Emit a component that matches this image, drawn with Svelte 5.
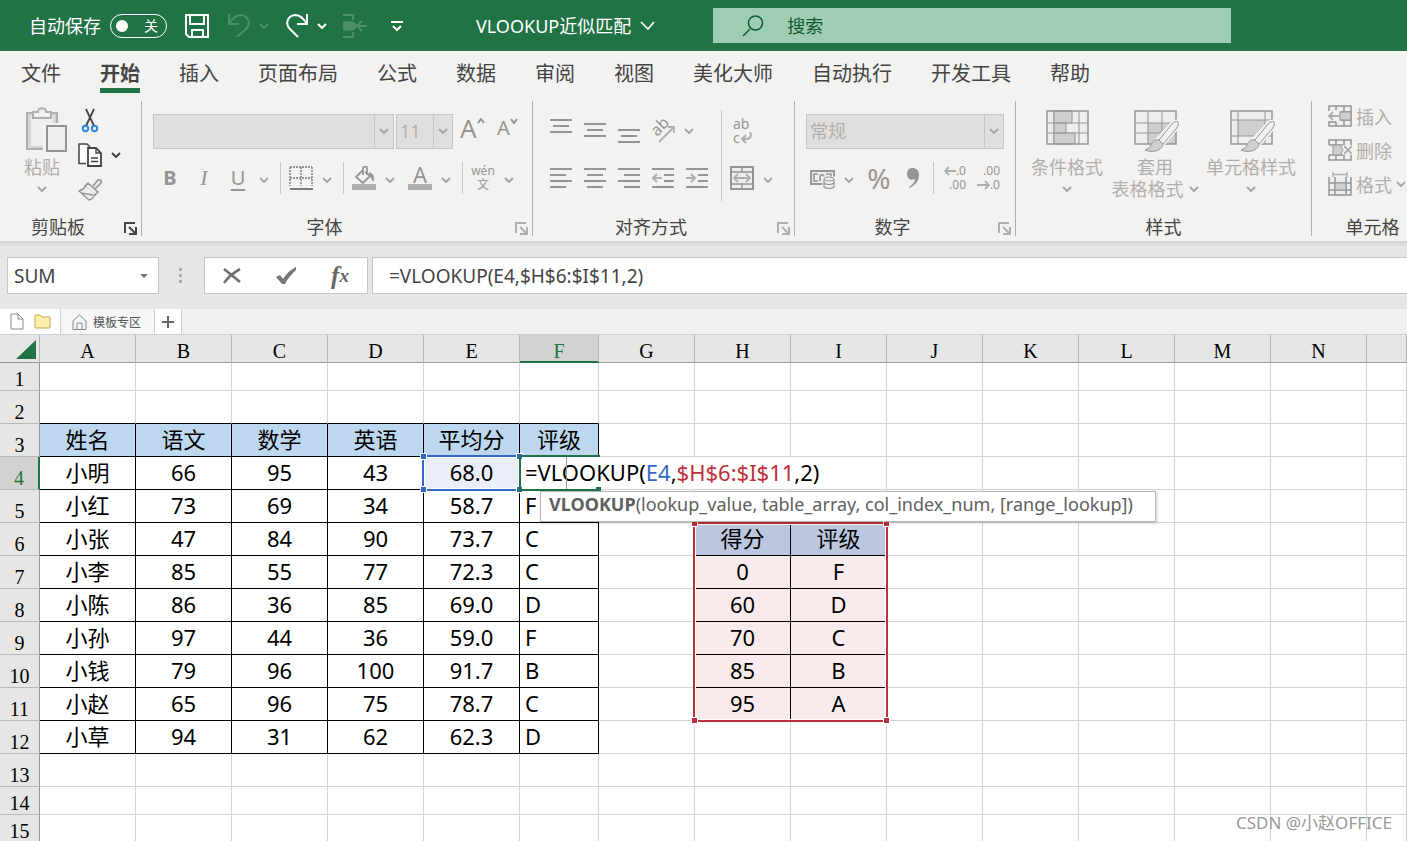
<script lang="ts">
  interface Row {
    n: number;
    short?: boolean;
    scores?: string[];
    lookup?: string[];
  }

  const menu = ['文件', '开始', '插入', '页面布局', '公式', '数据', '审阅', '视图', '美化大师', '自动执行', '开发工具', '帮助'];
  const columns = ['A', 'B', 'C', 'D', 'E', 'F', 'G', 'H', 'I', 'J', 'K', 'L', 'M', 'N', ''];

  const rows: Row[] = [
    { n: 1, short: true },
    { n: 2 },
    { n: 3, scores: ['姓名', '语文', '数学', '英语', '平均分', '评级'] },
    { n: 4, scores: ['小明', '66', '95', '43', '68.0', ''] },
    { n: 5, scores: ['小红', '73', '69', '34', '58.7', 'F'] },
    { n: 6, scores: ['小张', '47', '84', '90', '73.7', 'C'], lookup: ['得分', '评级'] },
    { n: 7, scores: ['小李', '85', '55', '77', '72.3', 'C'], lookup: ['0', 'F'] },
    { n: 8, scores: ['小陈', '86', '36', '85', '69.0', 'D'], lookup: ['60', 'D'] },
    { n: 9, scores: ['小孙', '97', '44', '36', '59.0', 'F'], lookup: ['70', 'C'] },
    { n: 10, scores: ['小钱', '79', '96', '100', '91.7', 'B'], lookup: ['85', 'B'] },
    { n: 11, scores: ['小赵', '65', '96', '75', '78.7', 'C'], lookup: ['95', 'A'] },
    { n: 12, scores: ['小草', '94', '31', '62', '62.3', 'D'] },
    { n: 13 },
    { n: 14, short: true },
    { n: 15, short: true },
  ];

  let activeMenu = $state('开始');
  let autosave = $state(false);
  let query = $state('');
  let cellName = $state('SUM');
  let formula = $state('=VLOOKUP(E4,$H$6:$I$11,2)');

  function cellText(row: Row, col: number) {
    if (col < 6) return row.scores?.[col] ?? '';
    if (col === 7 || col === 8) return row.lookup?.[col - 7] ?? '';
    return '';
  }

  // the in-cell editor spans F4:I4
  function visibleCols(row: Row) {
    return columns.map((_, i) => i).filter((i) => row.n !== 4 || i < 6 || i > 8);
  }

  const alignLines: Record<string, string> = {
    top: 'M1 3h22M4 9h16M1 15h22',
    middle: 'M1 7h22M4 13h16M1 19h22',
    bottom: 'M1 13h22M4 19h16M1 25h22',
    left: 'M1 5h22M1 11h16M1 17h22M1 23h16',
    center: 'M1 5h22M4 11h16M1 17h22M4 23h16',
    right: 'M1 5h22M7 11h16M1 17h22M7 23h16',
    outdent: 'M1 5h22M13 11h10M13 17h10M1 23h22',
    indent: 'M1 5h22M13 11h10M13 17h10M1 23h22',
  };
</script>

{#snippet chevron()}
  <svg class="chev" width="10" height="6" viewBox="0 0 10 6"><path d="M1 1l4 4 4-4" /></svg>
{/snippet}

{#snippet drop(label: string)}
  <button class="drop" aria-label={label}>{@render chevron()}</button>
{/snippet}

{#snippet lines(kind: string, label: string)}
  <button class="tool" aria-label={label}>
    <svg width="24" height="28" viewBox="0 0 24 28">
      <path d={alignLines[kind]} stroke="#979593" stroke-width="2" />
      {#if kind === 'outdent'}
        <path d="M11 14H2M6 10l-4 4 4 4" stroke="#b1afad" stroke-width="2" />
      {:else if kind === 'indent'}
        <path d="M1 14h9M6 10l4 4-4 4" stroke="#b1afad" stroke-width="2" />
      {/if}
    </svg>
  </button>
{/snippet}

{#snippet brush()}
  <path d="M49 15c-2-1-4 0-6 2L29 32l5 5 13-15c2-3 3-5 2-7z" fill="#f3f2f1" stroke="#f3f2f1" stroke-width="4" />
  <path d="M49 15c-2-1-4 0-6 2L30 33l4 4 13-15c2-3 3-5 2-7z" fill="#f3f2f1" stroke="#979593" />
  <path d="M30 33c-4-1-7 2-8 5-1 2-3 4-6 5 5 2 11 2 15-1 2-2 3-3 3-5z" fill="#cfcfcf" stroke="#979593" />
{/snippet}

{#snippet groupFoot(label: string, launcher: string)}
  <div class="foot">
    <span class="foot-label">{label}</span>
    {#if launcher}
      <button class="launcher {launcher}" aria-label="{label}设置">
        <svg width="13" height="13" viewBox="0 0 13 13"><path d="M1 11V1h10M5 5l6 6M12 5v7H5" /></svg>
      </button>
    {/if}
  </div>
{/snippet}

<div class="app">
  <header class="titlebar">
    <label for="autosave">自动保存</label>
    <span class="toggle">
      <input id="autosave" type="checkbox" bind:checked={autosave} />
      <span>{autosave ? '开' : '关'}</span>
    </span>
    <div class="quick">
      <button class="wide" aria-label="保存">
        <svg width="24" height="24" viewBox="0 0 24 24"><path d="M1 1h22v22H4l-3-3zM5 1v9h14V1M7 23v-7h11v7" stroke-width="2" /></svg>
      </button>
      <div class="pair dim">
        <button class="qbtn" aria-label="撤消">
          <svg width="24" height="24" viewBox="0 0 24 24"><path d="M2 0v10h10M2 10c3-5 7-9 12-9 8 1 10 9 5 14l-9 8" stroke-width="2" /></svg>
        </button>
        {@render drop('撤消列表')}
      </div>
      <div class="pair">
        <button class="qbtn" aria-label="恢复">
          <svg width="24" height="24" viewBox="0 0 24 24"><path d="M22 0v10H12M22 10c-3-5-7-9-12-9C2 2 0 10 5 15l8 8" stroke-width="2" /></svg>
        </button>
        {@render drop('恢复列表')}
      </div>
      <button class="qbtn dim" aria-label="插入单元格">
        <svg width="24" height="24" viewBox="0 0 24 24">
          <path d="M0 1h10v5M0 23h10v-5" stroke-width="2" />
          <path class="solid" d="M0 8h11l3 4-3 4H0z" />
          <path d="M24 12h-9M19 7l-5 5 5 5" stroke-width="2" />
        </svg>
      </button>
      <button class="wide" aria-label="自定义快速访问工具栏">
        <svg width="12" height="12" viewBox="0 0 12 12"><path d="M0 2h12M2 6l4 4 4-4" stroke-width="2" /></svg>
      </button>
    </div>
    <button class="doc">
      VLOOKUP近似匹配
      <svg width="15" height="9" viewBox="0 0 15 9"><path d="M1 1l7 7 6-7" stroke-width="1.6" /></svg>
    </button>
    <div class="search">
      <svg width="22" height="22" viewBox="0 0 22 22"><path d="M8 14L1 21" stroke-width="1.5" /><circle cx="13.5" cy="8" r="7" stroke-width="1.5" /></svg>
      <input type="text" placeholder="搜索" aria-label="搜索" bind:value={query} />
    </div>
  </header>

  <nav class="menu">
    {#each menu as item (item)}
      <button class:active={item === activeMenu} onclick={() => (activeMenu = item)}>{item}</button>
    {/each}
  </nav>

  <div class="ribbon">
    <section class="group clipboard">
      <div class="body">
        <button class="big paste">
          <svg width="52" height="46" viewBox="0 0 52 46">
            <path d="M11 6h30v36H11z" fill="#d6d6d6" stroke="#b1afad" stroke-width="2" />
            <path d="M15 9h22v30H15z" fill="#eee" />
            <path d="M17 11V5h5c0-5 8-5 8 0h5v6z" fill="#f3f2f1" stroke="#b1afad" stroke-width="2" />
            <path d="M27 16h24v28H27z" fill="#f3f2f1" />
            <path d="M31 19h19v25H31z" fill="#eee" stroke="#979593" stroke-width="2" />
          </svg>
          <span>粘贴</span>
          <span>{@render chevron()}</span>
        </button>
        <div class="stack">
          <button class="tool" aria-label="剪切">
            <svg width="24" height="26" viewBox="0 0 24 26">
              <path d="M8 2l8 17M16 2L8 19" stroke="#444" stroke-width="1.8" />
              <circle cx="7.5" cy="21.5" r="2.7" stroke="#2b88d8" stroke-width="2" />
              <circle cx="16.5" cy="21.5" r="2.7" stroke="#2b88d8" stroke-width="2" />
            </svg>
          </button>
          <div class="pair dark">
            <button class="tool" aria-label="复制">
              <svg width="24" height="24" viewBox="0 0 24 24">
                <path d="M8 20.500H1V1h8l3 3" fill="#fff" stroke="#444" stroke-width="1.5" />
                <path d="M10 5h8l5 5v13H10z" fill="#fff" stroke="#444" stroke-width="1.8" />
                <path d="M18 5v5h5M13 15h7M13 18.500h7" stroke="#444" stroke-width="1.3" />
              </svg>
            </button>
            {@render drop('复制选项')}
          </div>
          <button class="tool" aria-label="格式刷">
            <svg width="24" height="24" viewBox="0 0 24 24">
              <path d="M15 8l5-6c2-1 4 1 3 3l-6 6M10 5l10 9-3 3-10-9z" fill="#eee" stroke="#979593" stroke-width="1.6" />
              <path d="M8 8c-2 3-4 4-7 5l10 9c3-1 5-3 6-6M3 15l12 2" fill="#eee" stroke="#979593" stroke-width="1.4" />
            </svg>
          </button>
        </div>
      </div>
      {@render groupFoot('剪贴板', 'on')}
    </section>

    <section class="group font">
      <div class="body rows">
        <div class="line">
          <div class="combo family">
            <select aria-label="字体" disabled><option></option></select>
            <span class="arrow">{@render chevron()}</span>
          </div>
          <div class="combo size">
            <select aria-label="字号" disabled><option>11</option></select>
            <span class="arrow">{@render chevron()}</span>
          </div>
          <button class="tool grow" aria-label="增大字号">
            <span class="letter large">A</span><svg width="8" height="6" viewBox="0 0 8 6"><path d="M1 5l3-4 3 4" /></svg>
          </button>
          <button class="tool grow" aria-label="减小字号">
            <span class="letter">A</span><svg width="8" height="6" viewBox="0 0 8 6"><path d="M1 1l3 4 3-4" /></svg>
          </button>
        </div>
        <div class="line">
          <button class="tool letter bold">B</button>
          <button class="tool letter italic">I</button>
          <button class="tool letter underline">U</button>
          {@render drop('下划线选项')}
          <span class="sep"></span>
          <button class="tool" aria-label="边框">
            <svg width="24" height="24" viewBox="0 0 24 24">
              <path d="M1 1h22M1 12h22M1 1v19M12 1v19M23 1v19" stroke="#979593" stroke-width="1.8" stroke-dasharray="2 1" />
              <path d="M1 23h23" stroke="#807e7c" stroke-width="2" />
            </svg>
          </button>
          {@render drop('边框选项')}
          <span class="sep"></span>
          <button class="tool" aria-label="填充颜色">
            <svg width="24" height="24" viewBox="0 0 24 24">
              <path d="M11 4l-7 7 7 6 7-7-5-4M11 9V2c1-2 4-2 4 0v7" stroke="#979593" stroke-width="1.8" />
              <path d="M17 7c4 0 5 3 4 8-1-2-2-4-4-8z" fill="#979593" stroke="#979593" />
              <path d="M0 18h24v6H0z" fill="#b1afad" />
            </svg>
          </button>
          {@render drop('填充选项')}
          <span class="gap"></span>
          <button class="tool color" aria-label="字体颜色"><span class="letter">A</span></button>
          {@render drop('字体颜色选项')}
          <span class="sep"></span>
          <button class="tool pinyin"><span>wén</span><span>文</span></button>
          {@render drop('拼音选项')}
        </div>
      </div>
      {@render groupFoot('字体', 'off')}
    </section>

    <section class="group align">
      <div class="body">
        <div class="rows">
          <div class="line">
            {@render lines('top', '顶端对齐')}
            {@render lines('middle', '垂直居中')}
            {@render lines('bottom', '底端对齐')}
            <button class="tool slanted" aria-label="方向">
              <span>ab</span>
              <svg width="26" height="26" viewBox="0 0 26 26"><path d="M9 24L24 9M18 9h6v6" stroke="#b1afad" stroke-width="1.8" /></svg>
            </button>
            {@render drop('方向选项')}
          </div>
          <div class="line">
            {@render lines('left', '左对齐')}
            {@render lines('center', '居中')}
            {@render lines('right', '右对齐')}
            {@render lines('outdent', '减少缩进量')}
            {@render lines('indent', '增加缩进量')}
          </div>
        </div>
        <span class="sep tall"></span>
        <div class="rows">
          <div class="line">
            <button class="tool twoline wrap" aria-label="自动换行">
              <span>ab</span>
              <span>c<svg width="12" height="12" viewBox="0 0 12 12"><path d="M10 0c2 4 0 7-3 7H2M6 3L2 7l4 4" stroke="#b1afad" stroke-width="2" /></svg></span>
            </button>
          </div>
          <div class="line">
            <button class="tool" aria-label="合并后居中">
              <svg width="24" height="24" viewBox="0 0 24 24">
                <path d="M1 1h22v22H1z" fill="#eee" stroke="#979593" stroke-width="2" />
                <path d="M1 6h22M1 18h22M12 1v5M12 18v5" stroke="#979593" stroke-width="1.5" />
                <path d="M4 12h16M8 8l-4 4 4 4M16 8l4 4-4 4" stroke="#b1afad" stroke-width="1.8" />
              </svg>
            </button>
            {@render drop('合并选项')}
          </div>
        </div>
      </div>
      {@render groupFoot('对齐方式', 'off')}
    </section>

    <section class="group number">
      <div class="body rows">
        <div class="line">
          <div class="combo format">
            <select aria-label="数字格式" disabled><option>常规</option></select>
            <span class="arrow">{@render chevron()}</span>
          </div>
        </div>
        <div class="line">
          <button class="tool" aria-label="会计数字格式">
            <svg width="26" height="24" viewBox="0 0 26 24">
              <path d="M1 5h23v13H1z" fill="#eee" stroke="#979593" stroke-width="2" />
              <path d="M8 8H4v7h4M10 15v-4c0-3 4-3 4 0M16 8h5v3" stroke="#979593" stroke-width="1.6" />
              <path d="M13 11v11c2 2 9 2 12 0V11z" fill="#f3f2f1" stroke="#f3f2f1" />
              <path d="M14 13v8c2 2 8 2 10 0v-8M14 17c2 2 8 2 10 0" stroke="#979593" stroke-width="1.2" />
              <ellipse cx="19" cy="13" rx="5" ry="2" fill="#eee" stroke="#979593" />
            </svg>
          </button>
          {@render drop('会计格式选项')}
          <span class="gap"></span>
          <button class="tool percent">%</button>
          <button class="tool" aria-label="千位分隔样式">
            <svg width="12" height="20" viewBox="0 0 12 20"><path d="M5.500 0C9 0 12 2 12 7c0 6-4 10-9 13l-1-1c3-2 6-5 6-8-3 2-8 0-8-5 0-4 2-6 5.500-6z" fill="#979593" /></svg>
          </button>
          <span class="sep tight"></span>
          <button class="tool twoline decimals" aria-label="增加小数位数">
            <span><svg width="13" height="10" viewBox="0 0 13 10"><path d="M13 5H2M6 1L2 5l4 4" stroke="#b1afad" stroke-width="1.8" /></svg>.0</span>
            <span>.00</span>
          </button>
          <button class="tool twoline decimals" aria-label="减少小数位数">
            <span>.00</span>
            <span><svg width="13" height="10" viewBox="0 0 13 10"><path d="M0 5h12M8 1l4 4-4 4" stroke="#b1afad" stroke-width="1.8" /></svg>.0</span>
          </button>
        </div>
      </div>
      {@render groupFoot('数字', 'off')}
    </section>

    <section class="group styles">
      <div class="body">
        <button class="big cond">
          <svg width="52" height="46" viewBox="0 0 52 46">
            <path d="M6 4h41v33H6z" fill="#eee" />
            <path d="M6 16h41M6 26h41M13 4v33M38 4v33" stroke="#979593" />
            <path d="M13 4h18v12H13zM13 16h12v10H13zM13 26h21v11H13z" fill="#cfcfcf" stroke="#979593" />
            <path d="M6 4h41v33H6z" stroke="#979593" stroke-width="1.5" />
          </svg>
          <span>条件格式</span>
          <span>{@render chevron()}</span>
        </button>
        <button class="big">
          <svg width="52" height="46" viewBox="0 0 52 46">
            <path d="M6 4h41v33H6z" fill="#eee" />
            <path d="M19 16h28v21H19z" fill="#cfcfcf" />
            <path d="M6 16h41M6 26h41M19 4v33M33 4v33" stroke="#979593" />
            <path d="M6 4h41v33H6z" stroke="#979593" stroke-width="1.5" />
            {@render brush()}
          </svg>
          <span>套用</span>
          <span>表格格式 {@render chevron()}</span>
        </button>
        <button class="big">
          <svg width="52" height="46" viewBox="0 0 52 46">
            <path d="M6 4h41v33H6z" fill="#eee" />
            <path d="M13 13h27v16H13z" fill="#cfcfcf" />
            <path d="M6 13h41M6 29h41M13 4v33M40 4v33" stroke="#979593" />
            <path d="M6 4h41v33H6z" stroke="#979593" stroke-width="1.5" />
            {@render brush()}
          </svg>
          <span>单元格样式</span>
          <span>{@render chevron()}</span>
        </button>
      </div>
      {@render groupFoot('样式', '')}
    </section>

    <section class="group cells">
      <div class="body stack">
        <button class="small">
          <svg width="24" height="24" viewBox="0 0 24 24">
            <path d="M1 8V2h22v20H1v-6M8 2v4M16 2v20M8 18v4M12 8h11M12 16h11M1 18h7" fill="#eee" stroke="#979593" stroke-width="1.5" />
            <path d="M12 8h11v8H12z" fill="#cfcfcf" stroke="#979593" />
            <path d="M0 7h11v10H0z" fill="#f3f2f1" />
            <path d="M11 12H1M5 8l-4 4 4 4" stroke="#b1afad" stroke-width="1.8" />
          </svg>
          插入
        </button>
        <button class="small">
          <svg width="24" height="24" viewBox="0 0 24 24">
            <path d="M1 7V2h22v5M1 17v5h22v-5M8 2v5M16 2v5M8 17v5M16 17v5M1 7h14M1 17h14" stroke="#979593" stroke-width="1.5" />
            <path d="M5 7h7l3 5-3 5H5z" fill="#cfcfcf" stroke="#979593" />
            <path d="M16 8l8 8M24 8l-8 8" stroke="#b1afad" stroke-width="1.8" />
          </svg>
          删除
        </button>
        <button class="small">
          <svg width="24" height="24" viewBox="0 0 24 24">
            <path d="M1 5v18h22V5M1 11h22M1 18h22M7 5v18M18 5v18" fill="#eee" stroke="#979593" stroke-width="1.5" />
            <path d="M7 11h11v7H7z" fill="#cfcfcf" stroke="#979593" />
            <path d="M5 0v5M19 0v5M5 2.500h14" stroke="#b1afad" stroke-width="1.5" />
          </svg>
          格式
          {@render chevron()}
        </button>
      </div>
      {@render groupFoot('单元格', '')}
    </section>
  </div>

  <div class="formula-bar">
    <div class="name-box">
      <input type="text" aria-label="名称框" bind:value={cellName} />
      <button aria-label="名称列表"><svg width="8" height="4" viewBox="0 0 8 4"><path d="M0 0h8L4 4z" fill="#777" /></svg></button>
    </div>
    <span class="grip"><i></i><i></i><i></i></span>
    <div class="actions">
      <button aria-label="取消">
        <svg width="18" height="16" viewBox="0 0 18 16"><path d="M1 1c5 4 10 8 16 13M17 1C10 5 5 9 1 15" stroke="#707070" stroke-width="2.6" /></svg>
      </button>
      <button aria-label="输入">
        <svg width="20" height="17" viewBox="0 0 20 17"><path d="M0 10l4-2 3 4C10 7 14 3 20 0v3c-4 4-8 8-11 14H6z" fill="#777" /></svg>
      </button>
      <button class="fx" aria-label="插入函数">f<small>x</small></button>
    </div>
    <input class="formula" type="text" aria-label="编辑栏" bind:value={formula} />
  </div>

  <div class="doc-tabs">
    <div class="files">
      <button aria-label="新建">
        <svg width="14" height="17" viewBox="0 0 14 17"><path d="M1 1h7l5 5v10H1zM8 1v5h5" fill="#fff" stroke="#8a8a8a" /></svg>
      </button>
      <button aria-label="打开">
        <svg width="17" height="15" viewBox="0 0 17 15"><path d="M1 2c0-1 0-1 1-1h4l2 2h7c1 0 1 0 1 1v9c0 1 0 1-1 1H2c-1 0-1 0-1-1z" fill="#fff0b0" stroke="#c8a04a" /></svg>
      </button>
    </div>
    <button class="home">
      <svg width="15" height="16" viewBox="0 0 15 16"><path d="M1 7l6.500-6L14 7v8.500H1zM5 15.500V9h5v6.500" stroke="#8a8a8a" /></svg>
      模板专区
    </button>
    <button class="add" aria-label="新建标签">
      <svg width="12" height="12" viewBox="0 0 12 12"><path d="M6 0v12M0 6h12" stroke="#666" stroke-width="2" /></svg>
    </button>
  </div>

  <main class="sheet">
    <table>
      <colgroup>
        <col class="c-head" />
        {#each columns as col (col)}
          <col class={col === 'F' ? 'c-narrow' : col ? 'c-std' : 'c-rest'} />
        {/each}
      </colgroup>
      <thead>
        <tr>
          <th class="corner" aria-label="全选">
            <svg width="20" height="19" viewBox="0 0 20 19"><path d="M20 0v19H0z" fill="#217346" /></svg>
          </th>
          {#each columns as col (col)}
            <th scope="col" class:current={col === 'F'}>{col}</th>
          {/each}
        </tr>
      </thead>
      <tbody>
        {#each rows as row (row.n)}
          <tr class:short={row.short}>
            <th scope="row" class:current={row.n === 4}>{row.n}</th>
            {#each visibleCols(row) as col (col)}
              {#if row.n === 4 && col === 5}
                <td class="editing" colspan="4">
                  <span>=VLOOKUP(<b class="arg1">E4</b>,<b class="arg2">$H$6:$I$11</b>,2)</span>
                  <div class="active-cell"></div>
                  <div class="caret"></div>
                  <div class="tip" role="tooltip"><strong>VLOOKUP</strong>(lookup_value, table_array, col_index_num, [range_lookup])</div>
                </td>
              {:else}
                <td
                  class:boxed={row.scores && col < 6}
                  class:above={row.n === 2 && col < 6}
                  class:title={row.n === 3 && col < 6}
                  class:grade={row.n > 3 && col === 5}
                  class:range={row.lookup && (col === 7 || col === 8)}
                  class:range-title={row.n === 6 && (col === 7 || col === 8)}
                  class:ref={row.n === 4 && col === 4}
                >
                  {cellText(row, col)}
                  {#if row.n === 4 && col === 4}
                    <div class="marks blue"><i></i><i></i><i></i><i></i></div>
                  {:else if row.n === 6 && col === 7}
                    <div class="marks red"><i></i><i></i><i></i><i></i></div>
                  {/if}
                </td>
              {/if}
            {/each}
          </tr>
        {/each}
      </tbody>
    </table>
    <div class="watermark">CSDN @小赵OFFICE</div>
  </main>
</div>

<style>
  :global(body) {
    margin: 0;
    font-family: 'Noto Sans', 'Noto Sans CJK SC', sans-serif;
  }

  .app {
    display: flex;
    flex-direction: column;
    height: 100vh;
    overflow: hidden;
    background: #fff;
  }

  button,
  input,
  select {
    font: inherit;
    color: inherit;
    margin: 0;
    padding: 0;
    border: 0;
    background: none;
    box-sizing: border-box;
  }

  button {
    display: flex;
    align-items: center;
    justify-content: center;
    flex-shrink: 0;
    white-space: nowrap;
  }

  svg {
    display: block;
    flex-shrink: 0;
    fill: none;
  }

  .chev path {
    stroke: #a8a6a4;
    stroke-width: 2;
  }

  /* title bar */
  .titlebar {
    display: flex;
    align-items: center;
    height: 51px;
    padding-left: 29px;
    flex-shrink: 0;
    background: #217346;
    color: #fff;
    font-size: 18px;
    line-height: 24px;
    white-space: nowrap;
  }

  .titlebar svg path {
    stroke: #fff;
  }

  .titlebar .dim svg path {
    stroke: #4d9068;
  }

  .titlebar .dim svg .solid {
    fill: #4d9068;
  }

  .toggle {
    display: flex;
    align-items: center;
    justify-content: space-between;
    width: 57px;
    height: 24px;
    margin: 0 12px 0 9px;
    padding: 0 8px 0 5px;
    box-sizing: border-box;
    border: 1px solid #fff;
    border-radius: 12px;
    font-size: 14px;
    flex-shrink: 0;
  }

  .toggle input {
    appearance: none;
    width: 12px;
    height: 12px;
    border-radius: 6px;
    background: #fff;
  }

  .quick {
    display: flex;
    gap: 8px;
  }

  .wide {
    width: 36px;
  }

  .qbtn {
    width: 32px;
    height: 24px;
  }

  .pair {
    display: flex;
    align-items: center;
  }

  .doc {
    gap: 9px;
    margin: 0 58px 0 61px;
  }

  .search {
    display: flex;
    align-items: center;
    flex: 0 1 518px;
    height: 35px;
    padding-left: 29px;
    box-sizing: border-box;
    gap: 23px;
    background: #9fcdb3;
    color: #0f5a2f;
  }

  .search svg path,
  .search svg circle {
    stroke: #0f5a2f;
  }

  .search input {
    flex: 1;
    min-width: 0;
  }

  .search input::placeholder {
    color: #0f5a2f;
    opacity: 1;
  }

  /* menu */
  .menu {
    display: flex;
    gap: 39px;
    height: 50px;
    padding-left: 21px;
    flex-shrink: 0;
    background: #f3f2f1;
    color: #444;
    font-size: 20px;
  }

  .menu button {
    height: 42px;
    padding-top: 8px;
    border-bottom: 5px solid transparent;
    line-height: 29px;
  }

  .menu .active {
    border-color: #217346;
    font-weight: 700;
  }

  /* ribbon */
  .ribbon {
    display: flex;
    flex-shrink: 0;
    padding-bottom: 5px;
    background: #f3f2f1;
    overflow: hidden;
  }

  .group {
    display: flex;
    flex-direction: column;
    flex-shrink: 0;
    height: 135px;
    box-sizing: border-box;
    border-right: 1px solid #b3b0ad;
  }

  .clipboard {
    width: 142px;
  }

  .font {
    width: 391px;
  }

  .align {
    width: 262px;
  }

  .number {
    width: 221px;
  }

  .styles {
    width: 296px;
  }

  .cells {
    width: 122px;
  }

  .body {
    display: flex;
    flex: 1;
    min-height: 0;
    padding-left: 11px;
  }

  .rows {
    display: flex;
    flex-direction: column;
    gap: 13px;
    padding-top: 12px;
  }

  .stack {
    display: flex;
    flex-direction: column;
    padding-top: 1px;
  }

  .stack .tool {
    height: 35px;
  }

  .line {
    display: flex;
    align-items: center;
    height: 32px;
  }

  .line:first-child {
    height: 36px;
  }

  .line:last-child .drop {
    padding-top: 4px;
  }

  .tool {
    width: 34px;
    height: 32px;
    color: #979593;
  }

  .drop {
    width: 18px;
    height: 24px;
  }

  .dark .chev path {
    stroke: #444;
  }

  .sep {
    width: 1px;
    height: 32px;
    margin: 0 3px 0 7px;
    background: #c8c6c4;
  }

  .sep.tight {
    margin-left: 3px;
  }

  .sep.tall {
    height: 91px;
    margin-top: 9px;
  }

  .gap {
    width: 4px;
  }

  .combo {
    display: flex;
    height: 35px;
    box-sizing: border-box;
    border: 1px solid #c8c6c4;
    background: #e1dfdd;
  }

  .combo select {
    appearance: none;
    flex: 1;
    min-width: 0;
    padding-left: 3px;
    color: #b1afad;
    font-size: 18px;
    opacity: 1;
  }

  .combo .arrow {
    display: flex;
    align-items: center;
    justify-content: center;
    width: 18px;
    border-left: 1px solid #c8c6c4;
  }

  .family {
    width: 241px;
    margin-right: 2px;
  }

  .size {
    width: 57px;
    margin-right: 5px;
  }

  .format {
    width: 198px;
  }

  .letter {
    font-size: 20px;
    line-height: 26px;
  }

  .letter.large {
    font-size: 26px;
  }

  .grow {
    align-items: flex-start;
    justify-content: flex-start;
    width: 37px;
    padding-left: 2px;
  }

  .grow svg {
    margin-top: 3px;
  }

  .grow path {
    stroke: #979593;
    stroke-width: 2;
  }

  .bold {
    font-weight: 700;
  }

  .italic {
    font-family: 'Liberation Serif', serif;
    font-style: italic;
    font-size: 22px;
  }

  .underline {
    text-decoration: underline;
    text-underline-offset: 4px;
  }

  .color .letter {
    width: 24px;
    height: 24px;
    box-sizing: border-box;
    border-bottom: 6px solid #b1afad;
    font-size: 22px;
    line-height: 17px;
  }

  .pinyin {
    flex-direction: column;
    font-size: 12px;
    line-height: 14px;
  }

  .slanted {
    display: grid;
    place-items: center;
  }

  .slanted span,
  .slanted svg {
    grid-area: 1 / 1;
  }

  .slanted span {
    margin: 0 8px 10px 0;
    font-size: 16px;
    line-height: 18px;
    transform: rotate(-45deg);
  }

  .twoline {
    flex-direction: column;
    font-size: 12px;
    line-height: 14px;
  }

  .twoline span {
    display: flex;
    align-items: center;
  }

  .wrap {
    align-items: flex-start;
    padding-left: 8px;
    font-size: 14px;
  }

  .decimals {
    align-items: flex-end;
    padding-right: 5px;
  }

  .percent {
    font-size: 28px;
    line-height: 32px;
  }

  .big {
    flex-direction: column;
    justify-content: flex-start;
    align-self: flex-start;
    width: 96px;
    padding-top: 6px;
    color: #b1afad;
    font-size: 18px;
    line-height: 22px;
  }

  .big span {
    display: flex;
    align-items: center;
    gap: 5px;
    height: 22px;
  }

  .big svg + span {
    margin-top: 3px;
  }

  .paste {
    width: 62px;
  }

  .cond {
    width: 80px;
  }

  .cells .body {
    padding: 0 0 0 16px;
  }

  .small {
    justify-content: flex-start;
    height: 34px;
    gap: 4px;
    padding-bottom: 4px;
    color: #b1afad;
    font-size: 18px;
  }

  .foot {
    display: flex;
    align-items: center;
    height: 18px;
    color: #444;
    font-size: 18px;
    line-height: 18px;
  }

  .foot-label {
    flex: 1;
    text-align: center;
  }

  .launcher {
    width: 25px;
    padding: 3px 0 0 4px;
  }

  .launcher path {
    stroke: #b1afad;
    stroke-width: 2;
  }

  .launcher.on path {
    stroke: #444;
  }

  /* formula bar */
  .formula-bar {
    display: flex;
    height: 68px;
    padding: 16px 0 0 7px;
    box-sizing: border-box;
    flex-shrink: 0;
    background: linear-gradient(#d2d2d2, #e6e6e6 6px);
    color: #444;
    font-size: 19px;
  }

  .name-box,
  .actions,
  .formula {
    height: 37px;
    box-sizing: border-box;
    border: 1px solid #c6c6c6;
    background: #fff;
  }

  .name-box {
    display: flex;
    width: 152px;
  }

  .name-box input {
    flex: 1;
    min-width: 0;
    padding-left: 6px;
  }

  .name-box button {
    width: 28px;
  }

  .grip {
    display: flex;
    flex-direction: column;
    justify-content: center;
    gap: 3px;
    width: 3px;
    height: 37px;
    margin: 0 22px 0 20px;
  }

  .grip i {
    width: 3px;
    height: 3px;
    background: #ababab;
  }

  .actions {
    display: flex;
    width: 164px;
    margin-right: 4px;
  }

  .actions button {
    flex: 1;
  }

  .fx {
    color: #666;
    font-family: 'Liberation Serif', serif;
    font-size: 25px;
    font-style: italic;
    font-weight: 700;
  }

  .fx small {
    font-size: 19px;
  }

  .formula {
    flex: 1;
    min-width: 0;
    padding-left: 16px;
    border-right: 0;
  }

  /* document tabs */
  .doc-tabs {
    display: flex;
    height: 26px;
    box-sizing: border-box;
    flex-shrink: 0;
    border-bottom: 1px solid #d0d0d0;
    background: #f0f0f0;
    color: #555;
    font-size: 12px;
  }

  .files {
    display: flex;
    gap: 10px;
    padding: 0 9px 0 10px;
    border-right: 1px solid #d0d0d0;
    background: #fff;
  }

  .home {
    gap: 6px;
    padding: 0 13px 0 11px;
    border-right: 1px solid #d0d0d0;
    background: #f6f6f6;
  }

  .add {
    width: 27px;
    border-right: 1px solid #d0d0d0;
    background: #fff;
  }

  /* sheet */
  .sheet {
    position: relative;
    flex: 1;
    min-height: 0;
    overflow: hidden;
  }

  table {
    width: 100%;
    table-layout: fixed;
    border-collapse: separate;
    border-spacing: 0;
    color: #000;
  }

  .c-head {
    width: 40px;
  }

  .c-std {
    width: 96px;
  }

  .c-narrow {
    width: 79px;
  }

  .c-rest {
    width: auto;
  }

  tr {
    height: 33px;
  }

  thead tr,
  tr.short {
    height: 28px;
  }

  th {
    padding: 0;
    border-right: 1px solid #b8b8b8;
    border-bottom: 1px solid #999;
    background: #e6e6e6;
    font-family: 'Liberation Serif', serif;
    font-size: 20px;
    font-weight: 400;
    line-height: 22px;
  }

  th[scope='col'] {
    padding-top: 6px;
    line-height: 20px;
    vertical-align: top;
  }

  th[scope='row'] {
    border-right-color: #999;
    border-bottom-color: #b8b8b8;
    vertical-align: bottom;
  }

  th.current {
    background: #d2d2d2;
    color: #217346;
  }

  th[scope='col'].current {
    border-bottom: 2px solid #217346;
  }

  th[scope='row'].current {
    border-right: 2px solid #217346;
  }

  .corner svg {
    margin: 4px 0 2px 16px;
  }

  td {
    position: relative;
    padding: 0 0 2px;
    border-right: 1px solid #d4d4d4;
    border-bottom: 1px solid #d4d4d4;
    font-size: 22px;
    line-height: 24px;
    text-align: center;
    white-space: nowrap;
  }

  .above {
    border-bottom-color: #000;
  }

  .boxed {
    border-color: #000;
  }

  .title {
    background: #bdd7ee;
  }

  .grade,
  .editing {
    padding-left: 5px;
    text-align: left;
  }

  .range {
    border-color: #000;
    background: #f9ebeb;
  }

  .range-title {
    background: #bcc6df;
  }

  .ref {
    background: #e9eef8;
  }

  .editing b {
    font-weight: 400;
  }

  .arg1 {
    color: #3369c9;
  }

  .arg2 {
    color: #c0303c;
  }

  .marks {
    position: absolute;
    z-index: 1;
    box-sizing: border-box;
    border: 2px solid;
    box-shadow: inset 0 0 0 1px #fff;
  }

  .marks i {
    position: absolute;
    width: 5px;
    height: 5px;
    border: 1px solid #fff;
    background: currentColor;
  }

  .marks i:nth-child(odd) {
    left: -4px;
  }

  .marks i:nth-child(even) {
    right: -4px;
  }

  .marks i:nth-child(-n + 2) {
    top: -4px;
  }

  .marks i:nth-child(n + 3) {
    bottom: -4px;
  }

  .blue {
    inset: -2px;
    z-index: 2;
    color: #3369c9;
  }

  .red {
    top: -1px;
    left: -2px;
    width: 195px;
    height: 200px;
    color: #c0303c;
  }

  .active-cell {
    position: absolute;
    top: -2px;
    left: -1px;
    z-index: 2;
    width: 81px;
    height: 36px;
    box-sizing: border-box;
    border: solid #217346;
    border-width: 2px 0 2px 2px;
  }

  .active-cell::after {
    content: '';
    position: absolute;
    right: -1px;
    bottom: -3px;
    width: 5px;
    height: 5px;
    background: #217346;
  }

  .caret {
    position: absolute;
    top: 0;
    left: 46px;
    width: 1px;
    height: 32px;
    background: #999;
  }

  .tip {
    position: absolute;
    top: 34px;
    left: 20px;
    z-index: 3;
    min-width: 616px;
    height: 31px;
    padding: 0 9px 0 8px;
    box-sizing: border-box;
    border: 1px solid #b8b8b8;
    background: #fff;
    box-shadow: 1px 1px 3px #0003;
    color: #606060;
    font-size: 18px;
    line-height: 25px;
  }

  .watermark {
    position: absolute;
    right: 15px;
    bottom: 6px;
    color: #999;
    font-size: 17px;
    line-height: 24px;
    text-shadow: 0 0 2px #fff;
  }
</style>
